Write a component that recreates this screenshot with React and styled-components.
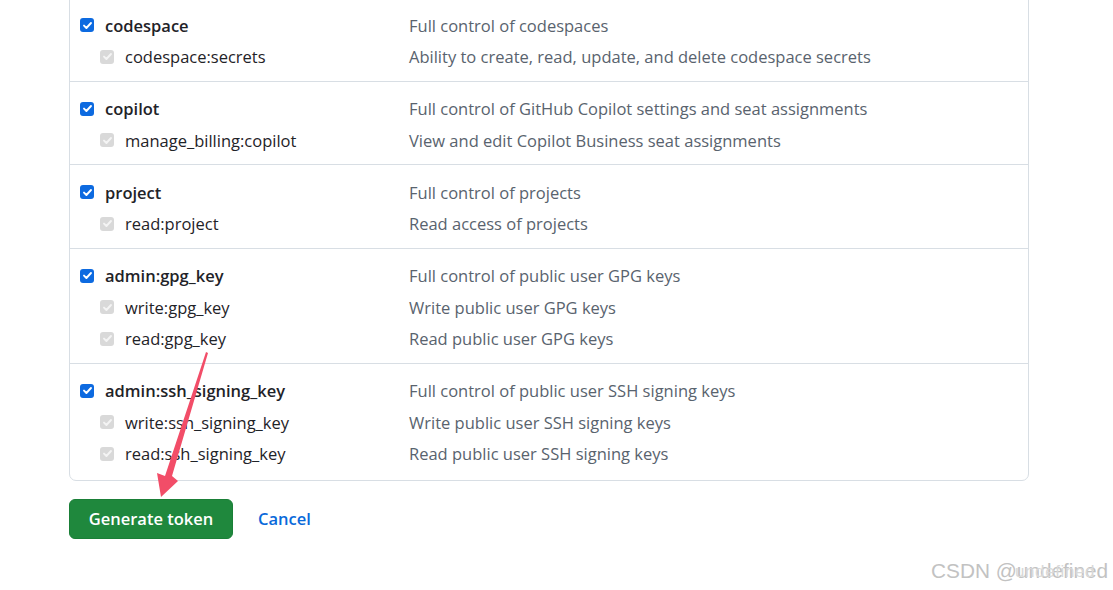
import React from "react";
import styled, { createGlobalStyle } from "styled-components";

const Global = createGlobalStyle`
  html, body { margin: 0; padding: 0; background: #ffffff; }
  body { font-family: "Open Sans", "Noto Sans", sans-serif; overflow: hidden; }
`;

const Page = styled.div`
  position: relative;
  width: 1113px;
  height: 590px;
  overflow: hidden;
  padding-left: 69px;
  box-sizing: border-box;
`;

const ScopeBox = styled.div`
  width: 960px;
  box-sizing: border-box;
  margin-top: -3px;
  border: 1px solid #d8dee4;
  border-radius: 0 0 7px 7px;
`;

const Section = styled.div`
  padding: 11.25px 10px 8.25px;
  & + & { border-top: 1px solid #d8dee4; }
  &:last-child { padding-bottom: 10.25px; }
`;

const Row = styled.div`
  display: grid;
  grid-template-columns: 329px 1fr;
  align-items: center;
  height: 31.5px;
`;

const Label = styled.label`
  display: flex;
  align-items: center;
  gap: 11px;
  padding-left: ${(p) => (p.$child ? "20px" : "0")};
  font-size: 16.5px;
  font-weight: ${(p) => (p.$child ? 400 : 600)};
  color: #1f2328;
`;

const Box = styled.span`
  width: 14px;
  height: 14px;
  border-radius: 3px;
  background: ${(p) => (p.$disabled ? "#d9d9d9" : "#0d6ae0")};
  display: inline-flex;
  align-items: center;
  justify-content: center;
  flex: none;
`;

const Desc = styled.span`
  font-size: 16.5px;
  color: #59636e;
`;

const Actions = styled.div`
  display: flex;
  align-items: center;
  gap: 12px;
  margin-top: 18px;
`;

const PrimaryButton = styled.button`
  height: 40px;
  width: 164px;
  border: 1px solid #1a7f37;
  border-radius: 6px;
  background: #1f883d;
  color: #ffffff;
  font-family: "Open Sans", "Noto Sans", sans-serif;
  font-size: 16.5px;
  font-weight: 600;
  cursor: pointer;
`;

const LinkButton = styled.button`
  border: none;
  background: none;
  padding: 0 13px;
  color: #0969da;
  font-family: "Open Sans", "Noto Sans", sans-serif;
  font-size: 16.5px;
  font-weight: 600;
  cursor: pointer;
`;

const Arrow = styled.svg`
  position: absolute;
  left: 0;
  top: 0;
  pointer-events: none;
`;

const Watermark = styled.div`
  position: absolute;
  left: 931px;
  top: 559px;
  font-family: "Liberation Sans", Arial, sans-serif;
  font-size: 20.8px;
  color: #c2c2c2;
  white-space: nowrap;
`;

const Ghost = styled.span`
  position: absolute;
  left: 84px;
  top: 3px;
  font-size: 17px;
  color: #d9d9d9;
  letter-spacing: 0.6px;
`;

const Check = ({ color }) => (
  <svg width="11" height="11" viewBox="0 0 11 11">
    <path d="M2 5.6 L4.4 8 L9 3" fill="none" stroke={color} strokeWidth="1.9" strokeLinecap="round" strokeLinejoin="round" />
  </svg>
);

const sections = [
  [
    ["codespace", "Full control of codespaces"],
    ["codespace:secrets", "Ability to create, read, update, and delete codespace secrets"],
  ],
  [
    ["copilot", "Full control of GitHub Copilot settings and seat assignments"],
    ["manage_billing:copilot", "View and edit Copilot Business seat assignments"],
  ],
  [
    ["project", "Full control of projects"],
    ["read:project", "Read access of projects"],
  ],
  [
    ["admin:gpg_key", "Full control of public user GPG keys"],
    ["write:gpg_key", "Write public user GPG keys"],
    ["read:gpg_key", "Read public user GPG keys"],
  ],
  [
    ["admin:ssh_signing_key", "Full control of public user SSH signing keys"],
    ["write:ssh_signing_key", "Write public user SSH signing keys"],
    ["read:ssh_signing_key", "Read public user SSH signing keys"],
  ],
];

export default function App() {
  return (
    <>
      <Global />
      <Page>
        <ScopeBox>
          {sections.map((rows, si) => (
            <Section key={si}>
              {rows.map(([name, desc], ri) => (
                <Row key={name}>
                  <Label $child={ri > 0}>
                    <Box $disabled={ri > 0}>
                      <Check color={ri > 0 ? "#f4f4f4" : "#ffffff"} />
                    </Box>
                    {name}
                  </Label>
                  <Desc>{desc}</Desc>
                </Row>
              ))}
            </Section>
          ))}
        </ScopeBox>
        <Actions>
          <PrimaryButton>Generate token</PrimaryButton>
          <LinkButton>Cancel</LinkButton>
        </Actions>
        <Arrow width="1113" height="590" viewBox="0 0 1113 590">
          <polygon points="206,352 208,353 172,476 178,481 161,497 157,473 165,476" fill="#f24d68" />
        </Arrow>
        <Watermark>
          CSDN @undefined
          <Ghost>undefined</Ghost>
        </Watermark>
      </Page>
    </>
  );
}
